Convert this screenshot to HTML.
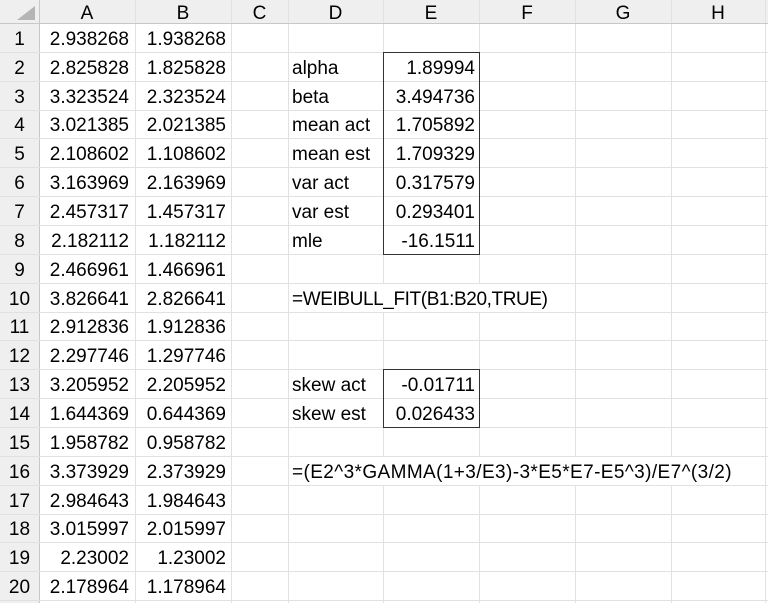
<!DOCTYPE html>
<html><head><meta charset="utf-8"><style>
body{margin:0;width:768px;height:603px;overflow:hidden;background:#fff;font-family:"Liberation Sans",sans-serif;font-size:19px;color:#000;position:relative}
.h{position:absolute;background:#efefef;}
.l{position:absolute;background:#e1e1e1}
.t{position:absolute;height:29px;line-height:31px;white-space:nowrap}
.r{text-align:right}
.c{text-align:center}
.w{position:absolute;background:#fff}
.box{position:absolute;border:1px solid #333;box-sizing:border-box}
</style></head><body>
<div class="h" style="left:0;top:0;width:768px;height:23px"></div>
<div class="h" style="left:0;top:0;width:39px;height:603px"></div>
<div style="position:absolute;left:17px;top:6px;width:0;height:0;border-left:18px solid transparent;border-bottom:14px solid #b5b5b5"></div>
<div class="l" style="left:39px;top:0;width:1px;height:603px;background:#c8c8c8"></div>
<div class="l" style="left:135px;top:0;width:1px;height:603px"></div>
<div class="l" style="left:231px;top:0;width:1px;height:603px"></div>
<div class="l" style="left:288px;top:0;width:1px;height:603px"></div>
<div class="l" style="left:383px;top:0;width:1px;height:603px"></div>
<div class="l" style="left:479px;top:0;width:1px;height:603px"></div>
<div class="l" style="left:575px;top:0;width:1px;height:603px"></div>
<div class="l" style="left:671px;top:0;width:1px;height:603px"></div>
<div class="l" style="left:765px;top:0;width:1px;height:603px"></div>
<div class="l" style="left:0;top:23px;width:768px;height:1px;background:#c8c8c8"></div>
<div class="l" style="left:0;top:52px;width:768px;height:1px"></div>
<div class="l" style="left:0;top:81px;width:768px;height:1px"></div>
<div class="l" style="left:0;top:110px;width:768px;height:1px"></div>
<div class="l" style="left:0;top:138px;width:768px;height:1px"></div>
<div class="l" style="left:0;top:167px;width:768px;height:1px"></div>
<div class="l" style="left:0;top:196px;width:768px;height:1px"></div>
<div class="l" style="left:0;top:225px;width:768px;height:1px"></div>
<div class="l" style="left:0;top:254px;width:768px;height:1px"></div>
<div class="l" style="left:0;top:283px;width:768px;height:1px"></div>
<div class="l" style="left:0;top:312px;width:768px;height:1px"></div>
<div class="l" style="left:0;top:340px;width:768px;height:1px"></div>
<div class="l" style="left:0;top:369px;width:768px;height:1px"></div>
<div class="l" style="left:0;top:398px;width:768px;height:1px"></div>
<div class="l" style="left:0;top:427px;width:768px;height:1px"></div>
<div class="l" style="left:0;top:456px;width:768px;height:1px"></div>
<div class="l" style="left:0;top:485px;width:768px;height:1px"></div>
<div class="l" style="left:0;top:514px;width:768px;height:1px"></div>
<div class="l" style="left:0;top:542px;width:768px;height:1px"></div>
<div class="l" style="left:0;top:571px;width:768px;height:1px"></div>
<div class="l" style="left:0;top:600px;width:768px;height:1px"></div>
<div class="w" style="left:289px;top:284px;width:282px;height:28px"></div>
<div class="w" style="left:289px;top:457px;width:475px;height:28px"></div>
<div class="t c" style="left:39px;top:-2px;width:96px">A</div>
<div class="t c" style="left:135px;top:-2px;width:96px">B</div>
<div class="t c" style="left:231px;top:-2px;width:57px">C</div>
<div class="t c" style="left:288px;top:-2px;width:95px">D</div>
<div class="t c" style="left:383px;top:-2px;width:96px">E</div>
<div class="t c" style="left:479px;top:-2px;width:96px">F</div>
<div class="t c" style="left:575px;top:-2px;width:96px">G</div>
<div class="t c" style="left:671px;top:-2px;width:94px">H</div>
<div class="t c" style="left:0;top:24px;width:39px">1</div><div class="t r" style="left:39px;top:24px;width:90px">2.938268</div><div class="t r" style="left:135px;top:24px;width:91px">1.938268</div>
<div class="t c" style="left:0;top:53px;width:39px">2</div><div class="t r" style="left:39px;top:53px;width:90px">2.825828</div><div class="t r" style="left:135px;top:53px;width:91px">1.825828</div>
<div class="t c" style="left:0;top:82px;width:39px">3</div><div class="t r" style="left:39px;top:82px;width:90px">3.323524</div><div class="t r" style="left:135px;top:82px;width:91px">2.323524</div>
<div class="t c" style="left:0;top:110px;width:39px">4</div><div class="t r" style="left:39px;top:110px;width:90px">3.021385</div><div class="t r" style="left:135px;top:110px;width:91px">2.021385</div>
<div class="t c" style="left:0;top:139px;width:39px">5</div><div class="t r" style="left:39px;top:139px;width:90px">2.108602</div><div class="t r" style="left:135px;top:139px;width:91px">1.108602</div>
<div class="t c" style="left:0;top:168px;width:39px">6</div><div class="t r" style="left:39px;top:168px;width:90px">3.163969</div><div class="t r" style="left:135px;top:168px;width:91px">2.163969</div>
<div class="t c" style="left:0;top:197px;width:39px">7</div><div class="t r" style="left:39px;top:197px;width:90px">2.457317</div><div class="t r" style="left:135px;top:197px;width:91px">1.457317</div>
<div class="t c" style="left:0;top:226px;width:39px">8</div><div class="t r" style="left:39px;top:226px;width:90px">2.182112</div><div class="t r" style="left:135px;top:226px;width:91px">1.182112</div>
<div class="t c" style="left:0;top:255px;width:39px">9</div><div class="t r" style="left:39px;top:255px;width:90px">2.466961</div><div class="t r" style="left:135px;top:255px;width:91px">1.466961</div>
<div class="t c" style="left:0;top:284px;width:39px">10</div><div class="t r" style="left:39px;top:284px;width:90px">3.826641</div><div class="t r" style="left:135px;top:284px;width:91px">2.826641</div>
<div class="t c" style="left:0;top:312px;width:39px">11</div><div class="t r" style="left:39px;top:312px;width:90px">2.912836</div><div class="t r" style="left:135px;top:312px;width:91px">1.912836</div>
<div class="t c" style="left:0;top:341px;width:39px">12</div><div class="t r" style="left:39px;top:341px;width:90px">2.297746</div><div class="t r" style="left:135px;top:341px;width:91px">1.297746</div>
<div class="t c" style="left:0;top:370px;width:39px">13</div><div class="t r" style="left:39px;top:370px;width:90px">3.205952</div><div class="t r" style="left:135px;top:370px;width:91px">2.205952</div>
<div class="t c" style="left:0;top:399px;width:39px">14</div><div class="t r" style="left:39px;top:399px;width:90px">1.644369</div><div class="t r" style="left:135px;top:399px;width:91px">0.644369</div>
<div class="t c" style="left:0;top:428px;width:39px">15</div><div class="t r" style="left:39px;top:428px;width:90px">1.958782</div><div class="t r" style="left:135px;top:428px;width:91px">0.958782</div>
<div class="t c" style="left:0;top:457px;width:39px">16</div><div class="t r" style="left:39px;top:457px;width:90px">3.373929</div><div class="t r" style="left:135px;top:457px;width:91px">2.373929</div>
<div class="t c" style="left:0;top:486px;width:39px">17</div><div class="t r" style="left:39px;top:486px;width:90px">2.984643</div><div class="t r" style="left:135px;top:486px;width:91px">1.984643</div>
<div class="t c" style="left:0;top:514px;width:39px">18</div><div class="t r" style="left:39px;top:514px;width:90px">3.015997</div><div class="t r" style="left:135px;top:514px;width:91px">2.015997</div>
<div class="t c" style="left:0;top:543px;width:39px">19</div><div class="t r" style="left:39px;top:543px;width:90px">2.23002</div><div class="t r" style="left:135px;top:543px;width:91px">1.23002</div>
<div class="t c" style="left:0;top:572px;width:39px">20</div><div class="t r" style="left:39px;top:572px;width:90px">2.178964</div><div class="t r" style="left:135px;top:572px;width:91px">1.178964</div>
<div class="t" style="left:292px;top:53px">alpha</div><div class="t r" style="left:383px;top:53px;width:92px">1.89994</div>
<div class="t" style="left:292px;top:82px">beta</div><div class="t r" style="left:383px;top:82px;width:92px">3.494736</div>
<div class="t" style="left:292px;top:110px">mean act</div><div class="t r" style="left:383px;top:110px;width:92px">1.705892</div>
<div class="t" style="left:292px;top:139px">mean est</div><div class="t r" style="left:383px;top:139px;width:92px">1.709329</div>
<div class="t" style="left:292px;top:168px">var act</div><div class="t r" style="left:383px;top:168px;width:92px">0.317579</div>
<div class="t" style="left:292px;top:197px">var est</div><div class="t r" style="left:383px;top:197px;width:92px">0.293401</div>
<div class="t" style="left:292px;top:226px">mle</div><div class="t r" style="left:383px;top:226px;width:92px">-16.1511</div>
<div class="t" style="left:292px;top:284px;letter-spacing:-0.4px">=WEIBULL_FIT(B1:B20,TRUE)</div>
<div class="t" style="left:292px;top:370px">skew act</div><div class="t r" style="left:383px;top:370px;width:92px">-0.01711</div>
<div class="t" style="left:292px;top:399px">skew est</div><div class="t r" style="left:383px;top:399px;width:92px">0.026433</div>
<div class="t" style="left:292px;top:457px;letter-spacing:0.4px">=(E2^3*GAMMA(1+3/E3)-3*E5*E7-E5^3)/E7^(3/2)</div>
<div class="box" style="left:383px;top:52px;width:97px;height:203px"></div>
<div class="box" style="left:383px;top:369px;width:97px;height:59px"></div>
</body></html>
